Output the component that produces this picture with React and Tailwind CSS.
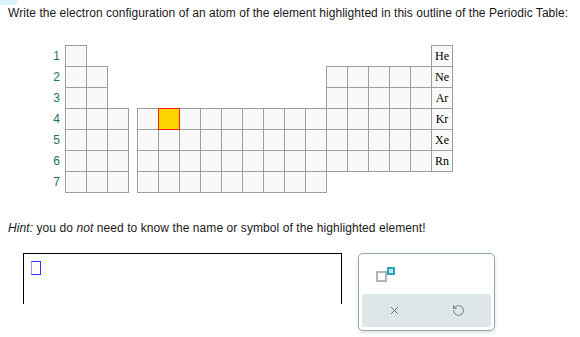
import { X, RotateCcw } from "lucide-react";

const ROWS = [
    // [row, columns present]
    [1, [1, 18]],
    [2, [1, 2, 13, 14, 15, 16, 17, 18]],
    [3, [1, 2, 13, 14, 15, 16, 17, 18]],
    [4, [1, 2, 3, 4, 5, 6, 7, 8, 9, 10, 11, 12, 13, 14, 15, 16, 17, 18]],
    [5, [1, 2, 3, 4, 5, 6, 7, 8, 9, 10, 11, 12, 13, 14, 15, 16, 17, 18]],
    [6, [1, 2, 3, 4, 5, 6, 7, 8, 9, 10, 11, 12, 13, 14, 15, 16, 17, 18]],
    [7, [1, 2, 3, 4, 5, 6, 7, 8, 9, 10, 11, 12]],
];

const NOBLE = { 1: "He", 2: "Ne", 3: "Ar", 4: "Kr", 5: "Xe", 6: "Rn" };

// grid column for a group: col 4 is the spacer between group 3 and group 4
const gridCol = (g) => (g <= 3 ? g : g + 1);

function Cell({ row, group }) {
    const highlighted = row === 4 && group === 5;
    return (
        <div
            style={{ gridColumn: gridCol(group), gridRow: row }}
            className={`w-[22px] h-[22px] border flex items-center justify-center text-[12px] leading-none text-black ${
                highlighted ? "relative z-10 bg-[#ffd500] border-[#ff1a1a]" : "bg-[#f9f9f9] border-[#9e9e9e]"
            }`}
        >
            {group === 18 && NOBLE[row] && (
                <span className="font-['Liberation_Serif',serif]">{NOBLE[row]}</span>
            )}
        </div>
    );
}

export default function App() {
    return (
        <div className="relative w-[580px] h-[337px] bg-white overflow-hidden font-['Liberation_Sans',Arial,sans-serif] text-[#1a1a1a]">
            <div className="absolute left-0 top-0 w-[18px] h-[5px] bg-[#daf3f8] rounded-br-[6px]" />

            <p className="pl-[8px] pt-[6px] text-[12px] leading-[14px] tracking-[0.045px]">
                Write the electron configuration of an atom of the element highlighted in this outline of the Periodic Table:
            </p>

            <div className="flex mt-[25px]">
                <div className="w-[65px] flex flex-col">
                    {[1, 2, 3, 4, 5, 6, 7].map((n) => (
                        <div key={n} className="h-[21px] flex items-center justify-end pr-[5px] pt-[1px] text-[12px] text-[#1f6f66]">
                            {n}
                        </div>
                    ))}
                </div>
                <div className="grid grid-cols-[repeat(3,21px)_9px_repeat(15,21px)] grid-rows-[repeat(7,21px)]">
                    {ROWS.flatMap(([row, groups]) =>
                        groups.map((g) => <Cell key={`${row}-${g}`} row={row} group={g} />)
                    )}
                </div>
            </div>

            <p className="pl-[8px] mt-[29px] text-[12px] leading-[14px] tracking-[0.08px]">
                <i>Hint:</i> you do <i>not</i> need to know the name or symbol of the highlighted element!
            </p>

            <div className="flex items-start mt-[18px] ml-[23px]">
                <div className="w-[319px] h-[51px] border-t border-l border-r border-black pl-[7px] pt-[7px]">
                    <div className="w-[10px] h-[14px] border border-[#3535ff] border-l-[#9a9aff]" />
                </div>
                <div className="ml-[16px] w-[137px] h-[78px] border border-[#8ea7ad] rounded-[5px] bg-white shadow-[0_2px_4px_rgba(0,0,0,0.12)] flex flex-col px-[3px] pb-[3px]">
                    <div className="flex-1 relative">
                        <div className="absolute left-[14px] top-[17px] w-[11px] h-[11px] border-2 border-[#a9b8bc] bg-white" />
                        <div className="absolute left-[25px] top-[13px] w-[8px] h-[8px] border-2 border-[#2fa3b5] bg-[#bfe9f0]" />
                    </div>
                    <div className="h-[33px] bg-[#dfe6e8] rounded-[3px] flex">
                        <button className="flex-1 flex items-center justify-center text-[#4f6b73]">
                            <X size={13} strokeWidth={1.6} />
                        </button>
                        <button className="flex-1 flex items-center justify-center text-[#4f6b73]">
                            <RotateCcw size={13} strokeWidth={1.6} />
                        </button>
                    </div>
                </div>
            </div>
        </div>
    );
}
